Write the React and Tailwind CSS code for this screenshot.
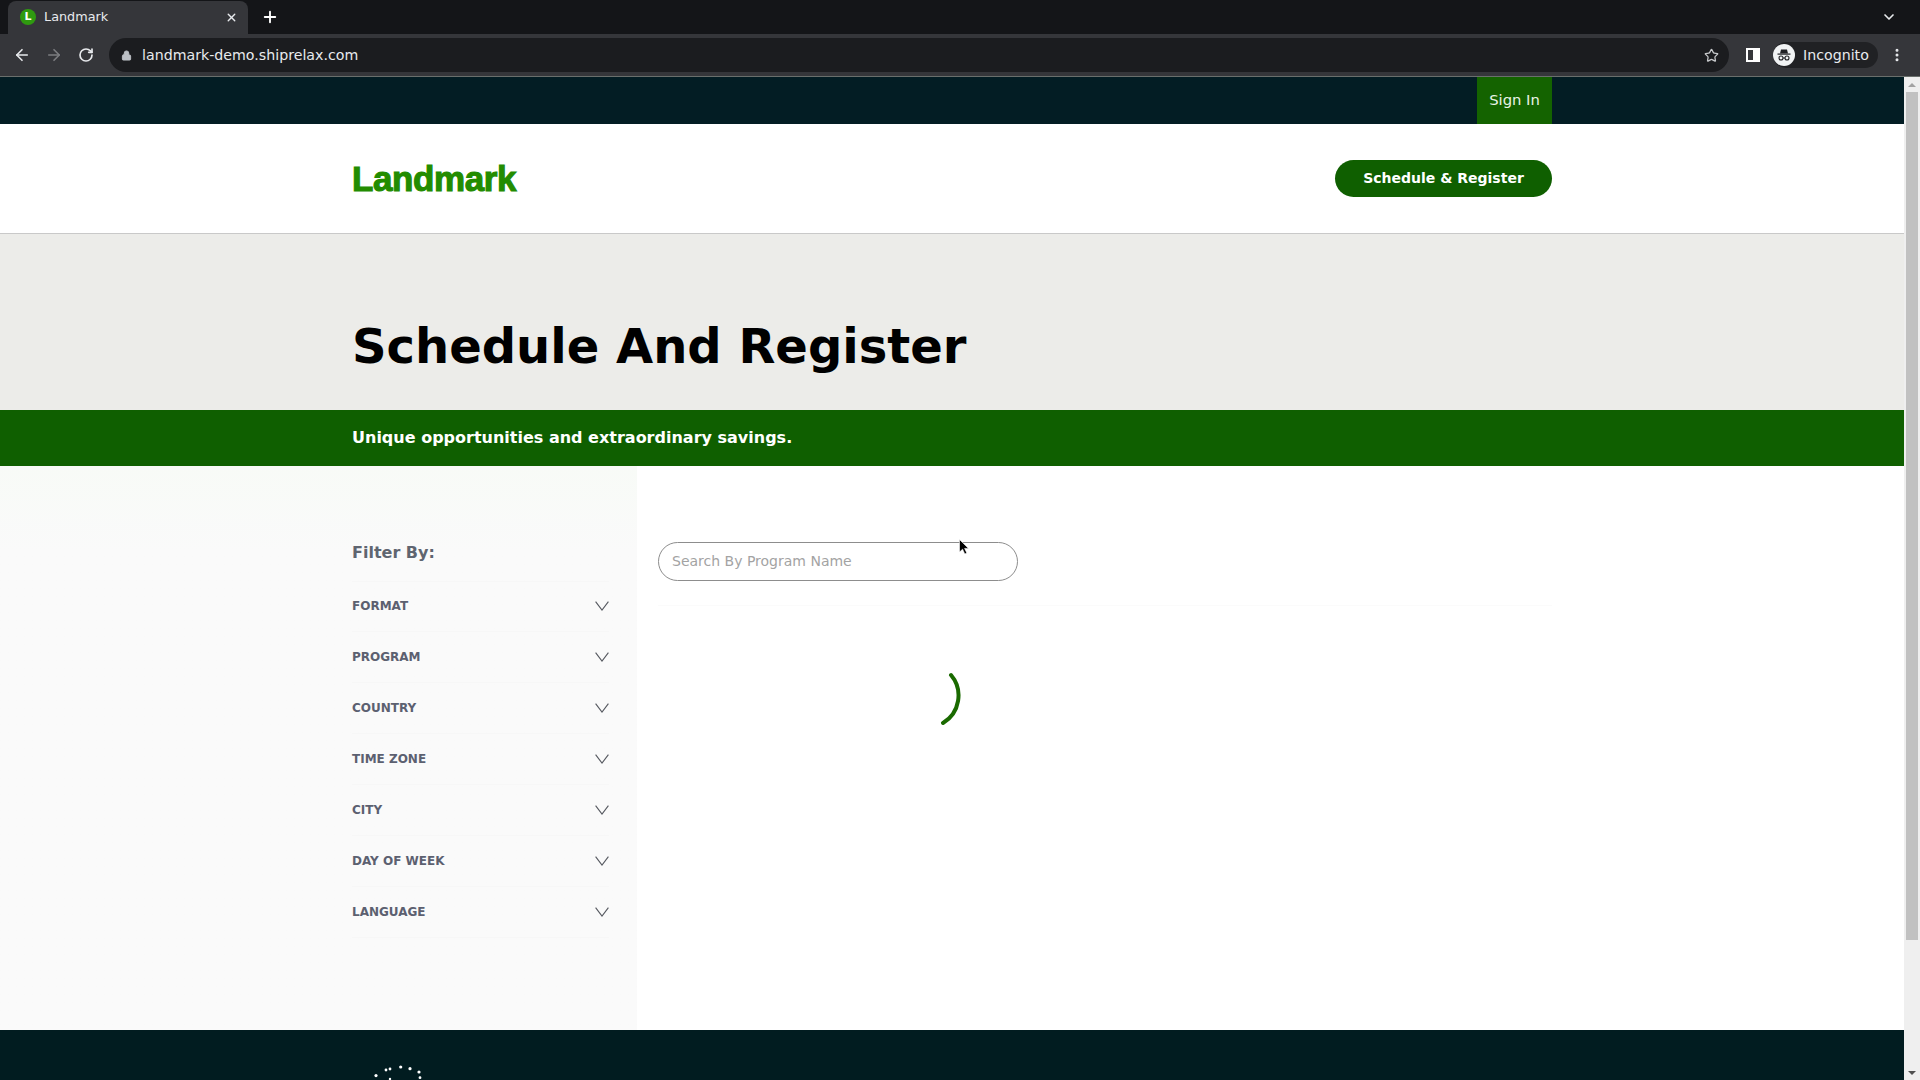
import React from "react";
import { ChevronDown, ArrowLeft, ArrowRight, RotateCw, Star, Lock, X, Plus, EllipsisVertical } from "lucide-react";

const filters = ["FORMAT", "PROGRAM", "COUNTRY", "TIME ZONE", "CITY", "DAY OF WEEK", "LANGUAGE"];

function Chrome() {
  return (
    <div className="h-[77px] shrink-0 flex flex-col bg-[#35363a] border-b border-[#6a6f6c]">
      <div className="h-[34px] bg-[#141518] flex items-end pl-2 relative">
        <div className="w-[240px] h-[33px] bg-[#35363a] rounded-t-lg flex items-center pl-3 pr-[8px] text-[#e8eaed] text-[12.8px]">
          <div className="w-4 h-4 rounded-full bg-[#2f9a10] flex items-center justify-center text-white text-[11px] font-bold mr-[8px] -mt-[1px]">L</div>
          <span className="-mt-[2px]">Landmark</span>
          <X className="ml-auto mr-[2px] -mt-[1px]" size={13} strokeWidth={2.5} />
        </div>
        <Plus className="ml-[13px] mb-[8px] text-white" size={18} strokeWidth={2.5} />
        <ChevronDown className="absolute right-[23px] top-[9px] text-[#e8eaed]" size={16} strokeWidth={2.5} />
      </div>
      <div className="flex-1 flex items-center text-[#e8eaed]">
        <ArrowLeft className="ml-[13px]" size={18} strokeWidth={2.2} />
        <ArrowRight className="ml-[14px] text-[#7c7d80]" size={18} strokeWidth={2.2} />
        <RotateCw className="ml-[15px]" size={16} strokeWidth={2.5} />
        <div className="ml-[15px] h-[34px] w-[1620px] rounded-full bg-[#1b1c1f] flex items-center pl-[12px] pr-[10px] text-[14.2px]">
          <Lock size={11} fill="#bdc1c6" className="text-[#bdc1c6]" />
          <span className="ml-[10px] pt-[2px]">landmark-demo.shiprelax.com</span>
          <Star className="ml-auto text-[#c8cacc]" size={15} strokeWidth={2} />
        </div>
        <div className="ml-[17px] w-[14px] h-[14px] border-2 border-white flex justify-end"><div className="w-[5px] h-full bg-white" /></div>
        <div className="ml-[13px] h-[26px] w-[105px] rounded-full bg-[#202124] flex items-center text-[14.2px]">
          <div className="w-[22px] h-[22px] rounded-full bg-[#f1f3f4] flex items-center justify-center">
            <svg width="16" height="16" viewBox="0 0 16 16" fill="none">
              <path d="M5 2.5h6l1 4H4z" fill="#202124" />
              <rect x="1.5" y="6.5" width="13" height="1.2" fill="#202124" />
              <circle cx="5" cy="11" r="2" stroke="#202124" strokeWidth="1.1" />
              <circle cx="11" cy="11" r="2" stroke="#202124" strokeWidth="1.1" />
              <path d="M7 11h2" stroke="#202124" strokeWidth="1.1" />
            </svg>
          </div>
          <span className="ml-[8px] pt-[2px]">Incognito</span>
        </div>
        <EllipsisVertical className="ml-[11px]" size={16} strokeWidth={2.5} />
      </div>
    </div>
  );
}

function Scrollbar() {
  return (
    <div className="w-4 shrink-0 bg-[#efefef] flex flex-col items-center">
      <div className="h-[15px] shrink-0 flex items-center justify-center">
        <div className="w-0 h-0 border-x-[4px] border-x-transparent border-b-[4px] border-b-[#a3a3a3]" />
      </div>
      <div className="w-[12px] h-[848px] bg-[#c1c1c1]" />
      <div className="flex-1" />
      <div className="h-[15px] shrink-0 flex items-center justify-center">
        <div className="w-0 h-0 border-x-[4px] border-x-transparent border-t-[4px] border-t-[#505050]" />
      </div>
    </div>
  );
}

function Chevron() {
  return (
    <svg width="14" height="10" viewBox="0 0 14 10" fill="none" className="shrink-0">
      <path d="M0.6 0.6L7 9L13.4 0.6" stroke="#55585f" strokeWidth="1.1" />
    </svg>
  );
}

export default function App() {
  return (
    <div className="h-[1080px] w-[1920px] overflow-hidden flex flex-col" style={{ fontFamily: '"DejaVu Sans", sans-serif' }}>
      <Chrome />
      <div className="flex-1 flex min-h-0">
        <div className="flex-1 min-w-0 flex flex-col relative">
          <div className="h-[47px] bg-[#031d24] flex justify-end pr-[352px]">
            <div className="w-[75px] pb-[1px] bg-[#146300] text-[#e9f3e6] text-[14.8px] flex items-center justify-center">Sign In</div>
          </div>
          <div className="h-[110px] bg-white border-b border-[#c9c9c9] flex items-center justify-between pl-[352px] pr-[352px]">
            <div className="text-[#238c00] text-[35px] font-bold tracking-[-0.4px] leading-none [-webkit-text-stroke:1.1px_#238c00]" style={{ fontFamily: '"Liberation Sans", sans-serif' }}>Landmark</div>
            <div className="w-[217px] h-[37px] rounded-full bg-[#0f5f00] text-white text-[14px] font-bold flex items-center justify-center">Schedule &amp; Register</div>
          </div>
          <div className="h-[176px] bg-[#ecece9] flex items-end pl-[352px] pb-[29px]">
            <h1 className="text-[48px] leading-[70px] font-bold text-black">Schedule And Register</h1>
          </div>
          <div className="h-[56px] bg-[#0f5f00] flex items-center pl-[352px] text-white text-[16px] font-bold">Unique opportunities and extraordinary savings.</div>
          <div className="h-[564px] flex bg-white">
            <div className="w-[637px] bg-gradient-to-b from-[#f8fbf7] to-[#fafafa] to-[15%] pl-[352px] pr-[28px] pt-[75px]">
              <div className="text-[#5f6570] text-[16px] font-bold h-[43px] leading-[24px]">Filter By:</div>
              <div className="border-t border-[#f7f7f7] mt-[-3px]">
                {filters.map((f) => (
                  <div key={f} className="h-[51px] border-b border-[#f7f7f7] flex items-center justify-between text-[#5c6070] text-[12px] font-bold first:h-[50px] first:pb-[2px]">
                    <span>{f}</span>
                    <Chevron />
                  </div>
                ))}
              </div>
            </div>
            <div className="w-[915px] pl-[21px] pt-[76px]">
              <div className="w-[360px] h-[39px] rounded-full border border-[#8d8d8d] flex items-center pl-[13px] text-[14px] text-[#a3a3a3]">Search By Program Name</div>
              <div className="h-px bg-[#fbfbfb] mt-[24px]" />
              <div className="pl-[278px] pt-[66px]">
                <svg width="26" height="54" viewBox="0 0 26 54" fill="none">
                  <path d="M15 3A32 32 0 0 1 7 51" stroke="#1a6a00" strokeWidth="4" strokeLinecap="round" />
                </svg>
              </div>
            </div>
          </div>
          <div className="flex-1 bg-[#011c20] pl-[370px] pt-[30px]">
            <svg width="52" height="20" viewBox="0 0 52 20" fill="white">
              <circle cx="6" cy="15.6" r="1.6" /><circle cx="16" cy="10" r="1.4" /><circle cx="20" cy="9" r="1.4" />
              <circle cx="30.7" cy="7" r="1.6" /><circle cx="40" cy="8.7" r="1.6" /><circle cx="49" cy="12" r="1.6" />
              <circle cx="50" cy="17.7" r="1.4" /><circle cx="20" cy="19" r="1.2" />
            </svg>
          </div>
          <svg className="absolute left-[959px] top-[462px]" width="10" height="16" viewBox="0 0 10 16">
            <path d="M0.5 0.5V13L3.6 10.2L5.8 15L7.8 14L5.6 9.4H9.5Z" fill="#000" stroke="#fff" strokeWidth="0.6" />
          </svg>
        </div>
        <Scrollbar />
      </div>
    </div>
  );
}
